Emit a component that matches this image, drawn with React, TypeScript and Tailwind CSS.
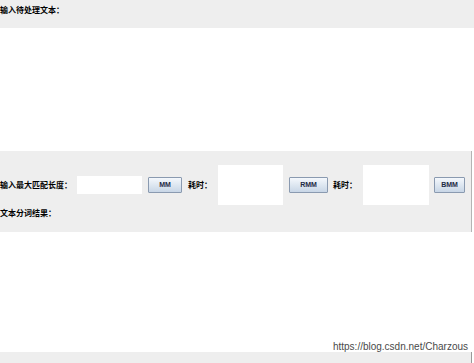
import React from 'react';

const cjk = { fontFamily: '"Noto Sans CJK SC", "DejaVu Sans", sans-serif' };

function SwingButton({ label, width }: { label: string; width: string }) {
  return (
    <button
      className={`${width} h-[16px] flex items-center justify-center border border-[#8a9ab0] bg-gradient-to-b from-[#f4f8fc] to-[#c8d6e6] text-[7px] font-bold text-[#1d2a44] rounded-[1px]`}
      style={{ fontFamily: '"Liberation Sans", Arial, sans-serif' }}
    >
      {label}
    </button>
  );
}

export default function App() {
  return (
    <div className="w-[474px] h-[363px] bg-white flex flex-col overflow-hidden leading-[12px]" style={cjk}>
      {/* 输入区 */}
      <div className="h-[28px] bg-[#eeeeee] flex items-start pt-[4px]">
        <span className="text-[8px] font-bold text-black leading-[12px]">输入待处理文本：</span>
      </div>
      <div className="h-[123px] bg-white" />

      {/* 控制区 */}
      <div className="h-[81px] bg-[#eeeeee] mr-[2px] border-r border-[#b4b4b4] flex flex-col">
        <div className="flex items-center h-[40px] mt-[14px]">
          <span className="text-[8px] font-bold text-black leading-[12px] w-[77px]">输入最大匹配长度：</span>
          <div className="w-[65px] h-[18px] bg-white" />
          <div className="ml-[6px]">
            <SwingButton label="MM" width="w-[34px]" />
          </div>
          <span className="ml-[6px] text-[8px] font-bold text-black leading-[12px]">耗时：</span>
          <div className="ml-[6px] w-[65px] h-[40px] bg-white" />
          <div className="ml-[6px]">
            <SwingButton label="RMM" width="w-[39px]" />
          </div>
          <span className="ml-[5px] text-[8px] font-bold text-black leading-[12px]">耗时：</span>
          <div className="ml-[6px] w-[66px] h-[40px] bg-white" />
          <div className="ml-[5px]">
            <SwingButton label="BMM" width="w-[31px]" />
          </div>
        </div>
        <div className="mt-[2px] h-[12px] flex items-center">
          <span className="text-[8px] font-bold text-black leading-[12px]">文本分词结果：</span>
        </div>
      </div>

      {/* 结果区 */}
      <div className="h-[120px] bg-white flex items-end justify-end pr-[6px]">
        <span
          className="text-[10px] text-[#4a4a4a] leading-[11px]"
          style={{ fontFamily: '"Liberation Sans", Arial, sans-serif' }}
        >
          https://blog.csdn.net/Charzous
        </span>
      </div>
      <div className="h-[11px] bg-[#eeeeee] mr-[2px] border-r border-[#9a9a9a]" />
    </div>
  );
}
